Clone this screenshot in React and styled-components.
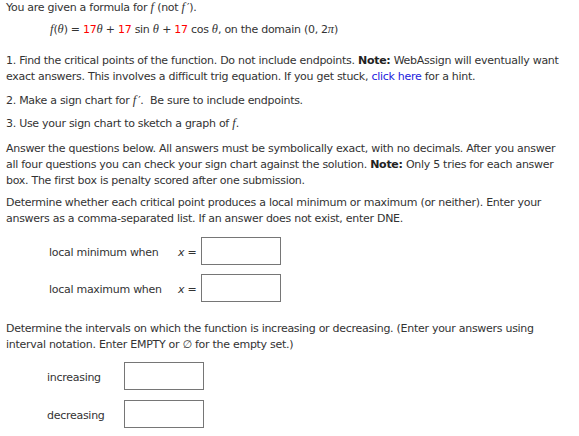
import React from 'react';
import styled, { createGlobalStyle } from 'styled-components';

const GlobalStyle = createGlobalStyle`
  html, body {
    margin: 0;
    padding: 0;
    background: #fff;
  }
  body {
    font-family: 'DejaVu Sans', Verdana, sans-serif;
    font-size: 11px;
    letter-spacing: -0.28px;
    color: #333;
  }
`;

const Page = styled.div`
  padding: 0 13px 0 6px;
  line-height: 16px;
`;

const P = styled.p`
  margin: ${(p) => p.$mt || 0}px 0 0;
`;

const Formula = styled.p`
  margin: 6px 0 0;
  padding-left: 44px;
`;

const Math = styled.span`
  font-family: 'Liberation Serif', 'Times New Roman', serif;
  font-style: italic;
  font-size: 12.5px;
  line-height: 1;
  letter-spacing: 0;
`;

const Prime = styled.span`
  margin-left: 2px;
`;

const Ital = styled.span`
  font-style: italic;
`;

const Red = styled.span`
  color: #f00;
`;

const Bold = styled.b`
  color: #222;
`;

const HintLink = styled.a`
  color: #2222dd;
  text-decoration: none;
`;

const AnswerGrid = styled.div`
  display: grid;
  grid-template-columns: ${(p) => p.$cols};
  row-gap: ${(p) => p.$gap}px;
  align-items: center;
  margin: ${(p) => p.$mt}px 0 0 ${(p) => p.$indent}px;
`;

const Label = styled.span`
  padding-top: 4px;
`;

const Eq = styled.span`
  padding-top: 4px;
  white-space: nowrap;
`;

const AnswerBox = styled.input`
  box-sizing: border-box;
  width: 80px;
  height: 28px;
  border: 1px solid #767676;
  border-radius: 0;
  padding: 2px 4px;
  font: inherit;
  outline: none;
`;

const App = () => (
  <>
    <GlobalStyle />
    <Page>
      <P>
        You are given a formula for <Math>f</Math> (not <Math>f</Math><Prime>′</Prime>).
      </P>
      <Formula>
        <Math>f</Math>(<Math>θ</Math>) = <Red>17</Red><Math>θ</Math> + <Red>17</Red> sin{' '}
        <Math>θ</Math> + <Red>17</Red> cos <Math>θ</Math>, on the domain (0, 2<Math>π</Math>)
      </Formula>
      <P $mt={15}>
        1. Find the critical points of the function. Do not include endpoints. <Bold>Note:</Bold>{' '}
        WebAssign will eventually want exact answers. This involves a difficult trig equation. If
        you get stuck, <HintLink href="#">click here</HintLink> for a hint.
      </P>
      <P $mt={8}>
        2. Make a sign chart for <Math>f</Math><Prime>′</Prime>.&nbsp; Be sure to include endpoints.
      </P>
      <P $mt={7}>
        3. Use your sign chart to sketch a graph of <Math>f</Math>.
      </P>
      <P $mt={9}>
        Answer the questions below. All answers must be symbolically exact, with no decimals. After
        you answer all four questions you can check your sign chart against the solution.{' '}
        <Bold>Note:</Bold> Only 5 tries for each answer box. The first box is penalty scored after
        one submission.
      </P>
      <P $mt={6}>
        Determine whether each critical point produces a local minimum or maximum (or neither).
        Enter your answers as a comma-separated list. If an answer does not exist, enter DNE.
      </P>
      <AnswerGrid $cols="129px 23px 80px" $mt={10} $gap={9} $indent={43}>
        <Label>local minimum when</Label>
        <Eq>
          <Ital>x</Ital> =
        </Eq>
        <AnswerBox type="text" />
        <Label>local maximum when</Label>
        <Eq>
          <Ital>x</Ital> =
        </Eq>
        <AnswerBox type="text" />
      </AnswerGrid>
      <P $mt={19}>
        Determine the intervals on which the function is increasing or decreasing. (Enter your
        answers using interval notation. Enter EMPTY or ∅ for the empty set.)
      </P>
      <AnswerGrid $cols="77px 80px" $mt={9} $gap={10} $indent={41}>
        <Label>increasing</Label>
        <AnswerBox type="text" />
        <Label>decreasing</Label>
        <AnswerBox type="text" />
      </AnswerGrid>
    </Page>
  </>
);

export default App;
